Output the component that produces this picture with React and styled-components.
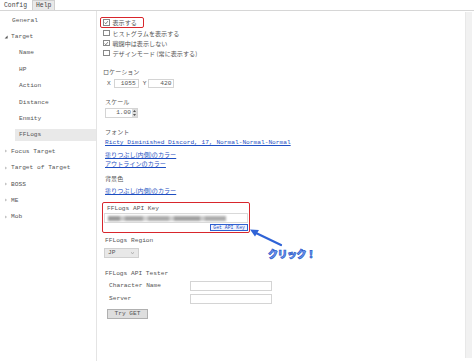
import styled, { createGlobalStyle } from "styled-components";

const GlobalStyle = createGlobalStyle`
  html, body {
    margin: 0;
    padding: 0;
    background: #fff;
    overflow: hidden;
  }
  body {
    font-family: "Liberation Mono", "Noto Sans CJK JP", monospace;
    color: #555;
  }
`;

const Window = styled.div`
  width: 474px;
  height: 361px;
  display: flex;
  flex-direction: column;
  font-size: 6.2px;
`;

const TabBar = styled.div`
  height: 10px;
  display: flex;
  align-items: flex-end;
  padding-left: 1px;
  border-bottom: 1px solid #d6d6d6;
`;

const Tab = styled.div`
  height: 10px;
  line-height: 10px;
  padding: 0 ${(p) => (p.$active ? 2 : 3)}px;
  margin-left: ${(p) => (p.$active ? 0 : 2)}px;
  background: ${(p) => (p.$active ? "#fff" : "#e9e9e9")};
  border: 1px solid ${(p) => (p.$active ? "transparent" : "#cfcfcf")};
  border-bottom: none;
  box-sizing: border-box;
  font-size: 6.4px;
  color: #444;
`;

const Body = styled.div`
  flex: 1;
  display: flex;
  min-height: 0;
`;

const Sidebar = styled.div`
  width: 96px;
  border-right: 1px solid #e4e4e4;
  padding-top: 1px;
`;

const TreeRow = styled.div`
  height: 16.4px;
  display: flex;
  align-items: center;
  padding-left: ${(p) => p.$indent}px;
  margin-left: ${(p) => (p.$selected ? 15 : 0)}px;
  background: ${(p) =>
    p.$selected
      ? "linear-gradient(transparent 2px, #e9e9e9 2px, #e9e9e9 14px, transparent 14px)"
      : "none"};
  white-space: nowrap;
`;

const Caret = styled.svg`
  width: 4px;
  height: 4px;
  margin-left: 4px;
  margin-right: 3px;
`;

const Main = styled.div`
  flex: 1;
  position: relative;
  padding: 6px 0 0 8px;
`;

const Scrollbar = styled.div`
  width: 6px;
  margin: 1px 2px 3px 0;
  background: #f1f1f1;
  border-left: 1px solid #e8e8e8;
`;

const CheckList = styled.div`
  display: flex;
  flex-direction: column;
  align-items: flex-start;
  margin-left: -2px;
`;

const CheckRow = styled.div`
  height: 10px;
  display: flex;
  align-items: center;
  gap: 2px;
  font-size: 6.1px;
  font-family: "Noto Sans CJK JP", sans-serif;
  white-space: nowrap;
`;

const Highlight = styled.div`
  display: inline-flex;
  align-items: center;
  height: 11px;
  box-sizing: border-box;
  border: 1.5px solid #d8262c;
  border-radius: 2px;
  padding: 0 6px 0 2px;
  margin-left: -3px;
`;

const Box = styled.span`
  width: 4.5px;
  height: 4.5px;
  border: 0.7px solid #888;
  display: inline-flex;
  align-items: center;
  justify-content: center;
  background: #fff;
  margin-right: 1px;
`;

const Label = styled.div`
  height: 10px;
  line-height: 10px;
  margin-top: ${(p) => p.$mt || 0}px;
  margin-left: ${(p) => p.$ml || 0}px;
  font-family: ${(p) =>
    p.$jp ? '"Noto Sans CJK JP", sans-serif' : '"Liberation Mono", monospace'};
  font-size: ${(p) => (p.$jp ? 6.1 : 6.2)}px;
  white-space: nowrap;
`;

const Link = styled(Label)`
  color: #1e4fc2;
  text-decoration: underline;
  height: ${(p) => p.$h || 10}px;
  line-height: ${(p) => p.$h || 10}px;
`;

const Row = styled.div`
  display: flex;
  align-items: center;
  height: 10px;
  margin-top: ${(p) => p.$mt || 0}px;
  margin-left: ${(p) => p.$ml || 0}px;
`;

const NumInput = styled.div`
  width: ${(p) => p.$w}px;
  height: 9px;
  box-sizing: border-box;
  border: 1px solid #d4d4d4;
  text-align: right;
  line-height: 7px;
  padding-right: 2px;
  margin-left: ${(p) => p.$ml || 0}px;
  background: #fff;
`;

const Axis = styled.span`
  margin-left: ${(p) => p.$ml || 0}px;
`;

const Spinner = styled.div`
  display: flex;
  height: 10px;
  border: 1px solid #d4d4d4;
  box-sizing: border-box;
  width: 33px;
  margin-top: 1px;
`;

const SpinValue = styled.div`
  flex: 1;
  text-align: right;
  line-height: 8px;
  padding-right: 1px;
`;

const SpinArrows = styled.div`
  width: 5px;
  background: #ddd;
  display: flex;
  flex-direction: column;
  align-items: center;
  justify-content: space-around;
`;

const KeyBox = styled.div`
  width: 148px;
  box-sizing: border-box;
  margin: 6px 0 0 -3px;
  border: 1.5px solid #d8262c;
  border-radius: 2px;
  padding: 0.5px 1px 1px;
`;

const KeyLabel = styled(Label)`
  height: 9px;
  line-height: 9px;
`;

const KeyInput = styled.div`
  height: 10px;
  box-sizing: border-box;
  border: 1px solid #d9d9d9;
  margin-top: 0.5px;
  padding: 2px 3px;
  overflow: hidden;
`;

const Blurred = styled.div`
  width: 118px;
  height: 5px;
  filter: blur(0.9px);
  background: linear-gradient(
    90deg,
    #9a9a9a 0 10%,
    #c8c8c8 10% 14%,
    #a5a5a5 14% 30%,
    #d0d0d0 30% 34%,
    #aaaaaa 34% 52%,
    #cdcdcd 52% 56%,
    #a0a0a0 56% 78%,
    #c9c9c9 78% 82%,
    #acacac 82% 100%
  );
`;

const KeyFoot = styled.div`
  display: flex;
  justify-content: flex-end;
  margin-top: 0.5px;
`;

const GetKey = styled.div`
  height: 7px;
  line-height: 5px;
  box-sizing: border-box;
  border: 1.2px solid #2f5fd0;
  background: #eef3ff;
  color: #1e4fc2;
  font-size: 4.8px;
  padding: 0 2px;
`;

const Select = styled.div`
  width: 35px;
  height: 10px;
  box-sizing: border-box;
  border: 1px solid #d0d0d0;
  background: #e8e8e8;
  margin: 2px 0 0 -1px;
  display: flex;
  align-items: center;
  justify-content: space-between;
  padding: 0 4px 0 3px;
`;

const TextInput = styled.div`
  width: 82px;
  height: 10px;
  box-sizing: border-box;
  border: 1px solid #d4d4d4;
  background: #fff;
  margin-left: auto;
`;

const TesterRow = styled(Row)`
  width: 167px;
  padding-left: 4px;
  box-sizing: border-box;
`;

const Button = styled.div`
  width: 41px;
  height: 10px;
  box-sizing: border-box;
  border: 1px solid #b0b0b0;
  background: #dedede;
  text-align: center;
  line-height: 8px;
  margin: 5px 0 0 2px;
`;

const Callout = styled.div`
  position: absolute;
  left: 171px;
  top: 235px;
  font-family: "Noto Sans CJK JP", sans-serif;
  font-weight: 900;
  font-size: 10px;
  letter-spacing: -0.5px;
  color: #6f9bf2;
  -webkit-text-stroke: 0.7px #2b58c8;
  text-shadow: 0 0 1px #fff;
  white-space: nowrap;
`;

const Arrow = styled.svg`
  position: absolute;
  left: 150px;
  top: 216px;
  width: 40px;
  height: 22px;
`;

const Check = () => (
  <svg width="5" height="5" viewBox="0 0 10 10">
    <path d="M1.5 5.2 L4 7.8 L8.6 2" fill="none" stroke="#444" strokeWidth="1.5" />
  </svg>
);

const tree = [
  { label: "General", indent: 12 },
  { label: "Target", caret: "open" },
  { label: "Name", indent: 19 },
  { label: "HP", indent: 19 },
  { label: "Action", indent: 19 },
  { label: "Distance", indent: 19 },
  { label: "Enmity", indent: 19 },
  { label: "FFLogs", indent: 4, selected: true },
  { label: "Focus Target", caret: "closed" },
  { label: "Target of Target", caret: "closed" },
  { label: "BOSS", caret: "closed" },
  { label: "ME", caret: "closed" },
  { label: "Mob", caret: "closed" },
];

const checks = [
  { label: "ヒストグラムを表示する", on: false },
  { label: "戦闘中は表示しない", on: true },
  { label: "デザインモード (常に表示する)", on: false },
];

export default function App() {
  return (
    <>
      <GlobalStyle />
      <Window>
        <TabBar>
          <Tab $active>Config</Tab>
          <Tab>Help</Tab>
        </TabBar>
        <Body>
          <Sidebar>
            {tree.map((t) => (
              <TreeRow key={t.label} $indent={t.caret ? 0 : t.indent} $selected={t.selected}>
                {t.caret && (
                  <Caret viewBox="0 0 4 4">
                    {t.caret === "open" ? (
                      <path d="M3.6 0.6 L3.6 3.6 L0.6 3.6 Z" fill="#555" />
                    ) : (
                      <path d="M1 0.5 L3.2 2 L1 3.5 Z" fill="#c4c4c4" />
                    )}
                  </Caret>
                )}
                {t.label}
              </TreeRow>
            ))}
          </Sidebar>

          <Main>
            <CheckList>
              <Highlight>
                <CheckRow>
                  <Box>
                    <Check />
                  </Box>
                  表示する
                </CheckRow>
              </Highlight>
              {checks.map((c) => (
                <CheckRow key={c.label}>
                  <Box>{c.on && <Check />}</Box>
                  {c.label}
                </CheckRow>
              ))}
            </CheckList>

            <Label $jp $mt={9} $ml={-2}>ロケーション</Label>
            <Row $mt={1} $ml={2}>
              <Axis>X</Axis>
              <NumInput $w={25} $ml={3}>1055</NumInput>
              <Axis $ml={4}>Y</Axis>
              <NumInput $w={26} $ml={2}>420</NumInput>
            </Row>

            <Label $jp $mt={9}>スケール</Label>
            <Spinner>
              <SpinValue>1.00</SpinValue>
              <SpinArrows>
                <svg width="3" height="2" viewBox="0 0 3 2"><path d="M0 2 L1.5 0 L3 2Z" fill="#555" /></svg>
                <svg width="3" height="2" viewBox="0 0 3 2"><path d="M0 0 L1.5 2 L3 0Z" fill="#555" /></svg>
              </SpinArrows>
            </Spinner>

            <Label $jp $mt={9}>フォント</Label>
            <Link $mt={1}>Ricty Diminished Discord, 17, Normal-Normal-Normal</Link>
            <Link $jp $mt={2} $h={9}>塗りつぶし(内側)のカラー</Link>
            <Link $jp $h={9}>アウトラインのカラー</Link>

            <Label $jp $mt={6}>背景色</Label>
            <Link $jp $mt={2}>塗りつぶし(内側)のカラー</Link>

            <KeyBox>
              <KeyLabel $ml={3}>FFLogs API Key</KeyLabel>
              <KeyInput>
                <Blurred />
              </KeyInput>
              <KeyFoot>
                <GetKey>Get API Key</GetKey>
              </KeyFoot>
            </KeyBox>

            <Label $mt={3}>FFLogs Region</Label>
            <Select>
              <span>JP</span>
              <svg width="3" height="2" viewBox="0 0 3 2"><path d="M0 0 L1.5 2 L3 0" fill="none" stroke="#999" strokeWidth="0.6" /></svg>
            </Select>

            <Label $mt={11}>FFLogs API Tester</Label>
            <TesterRow $mt={2}>
              <span>Character Name</span>
              <TextInput />
            </TesterRow>
            <TesterRow $mt={3}>
              <span>Server</span>
              <TextInput />
            </TesterRow>
            <Button>Try GET</Button>

            <Arrow viewBox="0 0 40 22">
              <path d="M34 18 L9 6" stroke="#2f63d6" strokeWidth="2.2" strokeLinecap="round" />
              <path d="M3 2.5 L12 3 L8 9.5 Z" fill="#2f63d6" />
            </Arrow>
            <Callout>クリック！</Callout>
          </Main>
          <Scrollbar />
        </Body>
      </Window>
    </>
  );
}
